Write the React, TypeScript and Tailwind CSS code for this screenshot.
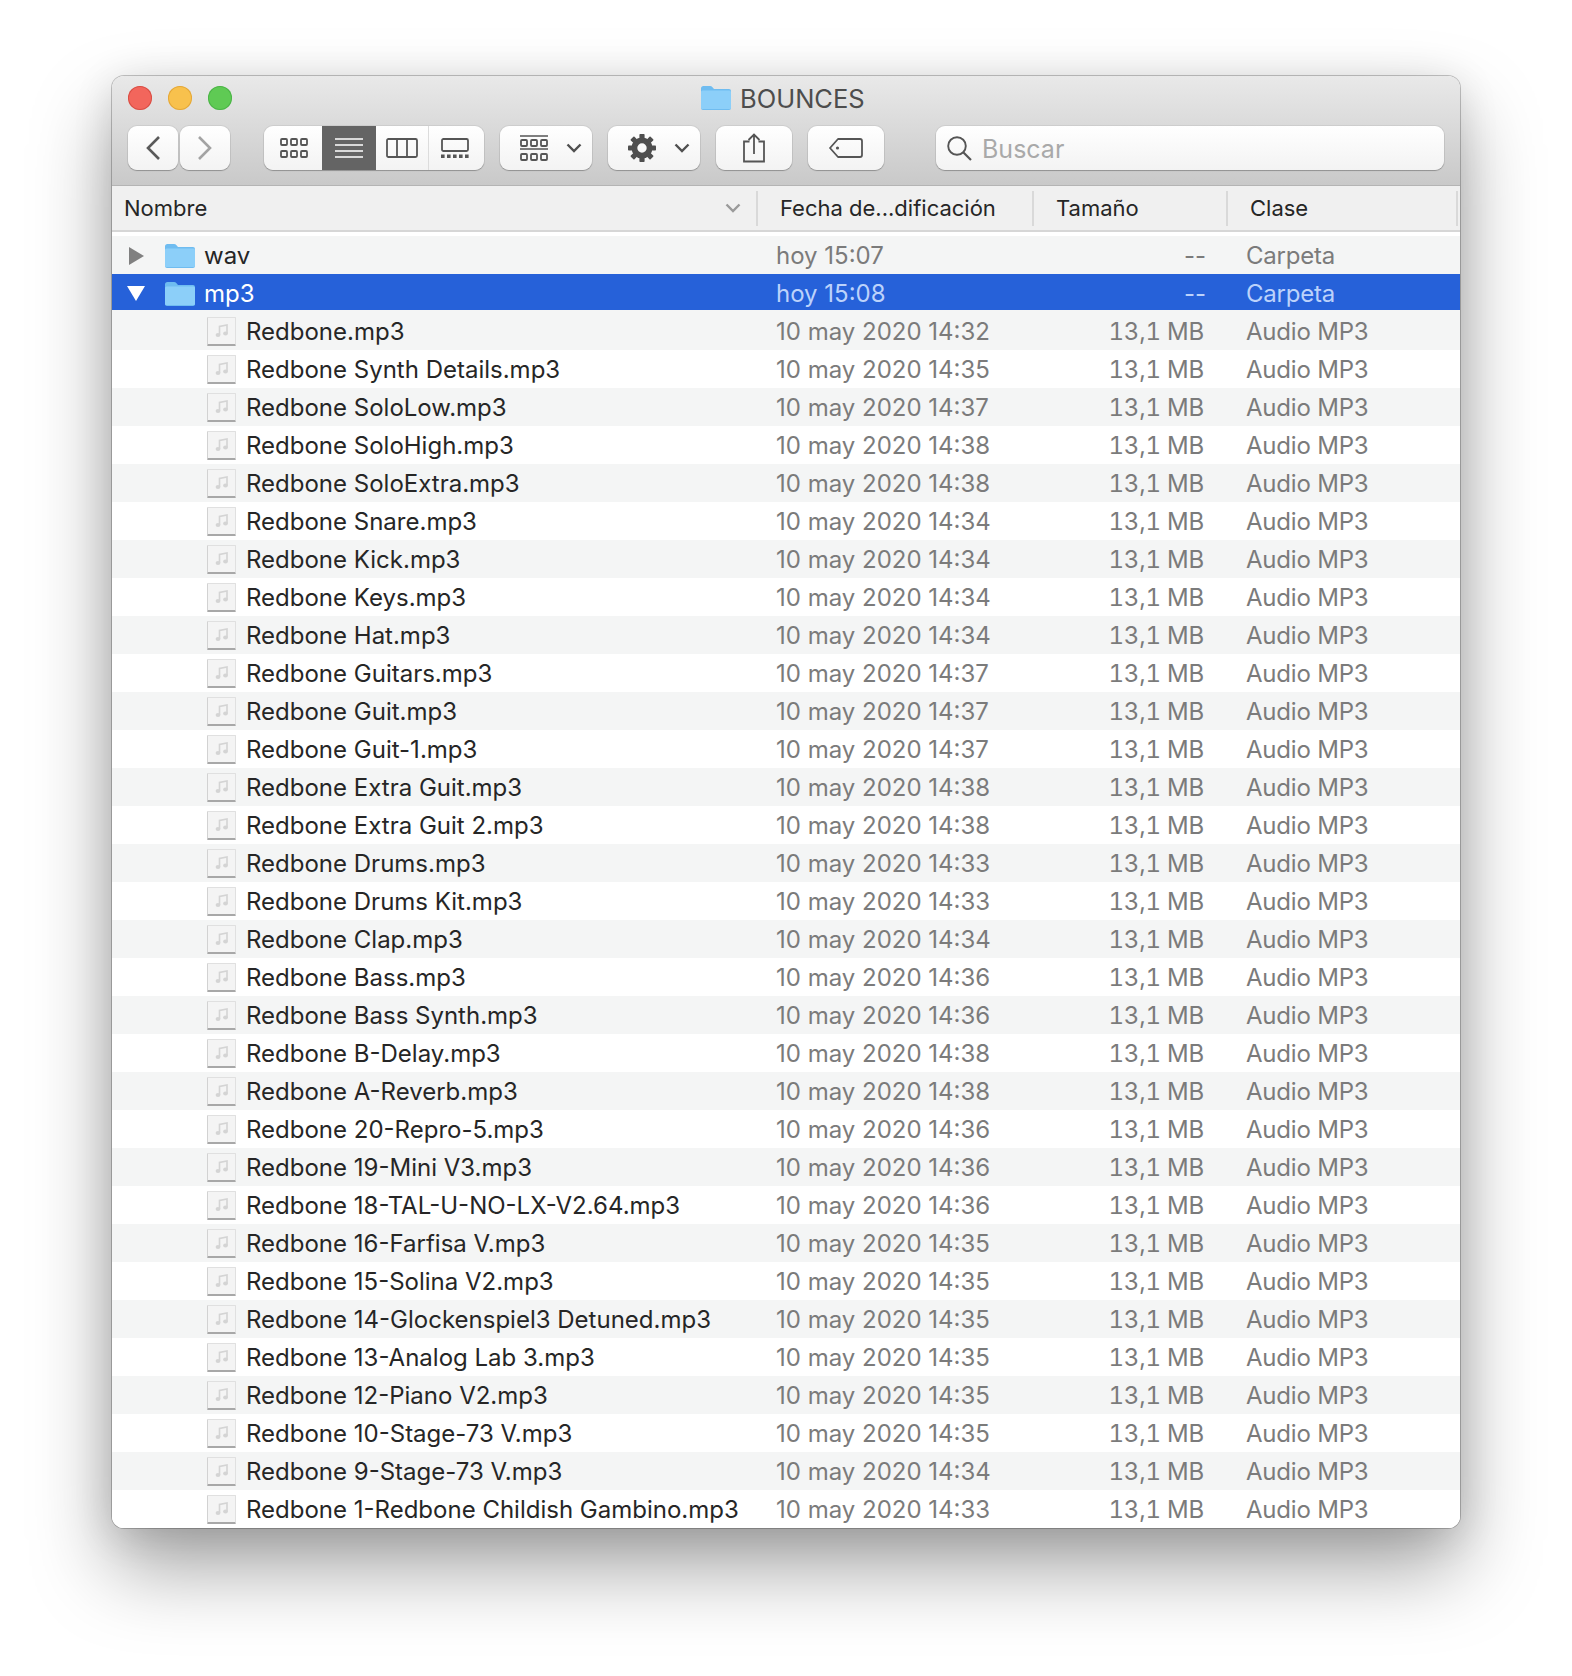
const FONT = "font-['Inter','Liberation_Sans',sans-serif]";

type FileRow = { name: string; date: string };

const files: FileRow[] = [
  { name: 'Redbone.mp3', date: '10 may 2020 14:32' },
  { name: 'Redbone Synth Details.mp3', date: '10 may 2020 14:35' },
  { name: 'Redbone SoloLow.mp3', date: '10 may 2020 14:37' },
  { name: 'Redbone SoloHigh.mp3', date: '10 may 2020 14:38' },
  { name: 'Redbone SoloExtra.mp3', date: '10 may 2020 14:38' },
  { name: 'Redbone Snare.mp3', date: '10 may 2020 14:34' },
  { name: 'Redbone Kick.mp3', date: '10 may 2020 14:34' },
  { name: 'Redbone Keys.mp3', date: '10 may 2020 14:34' },
  { name: 'Redbone Hat.mp3', date: '10 may 2020 14:34' },
  { name: 'Redbone Guitars.mp3', date: '10 may 2020 14:37' },
  { name: 'Redbone Guit.mp3', date: '10 may 2020 14:37' },
  { name: 'Redbone Guit-1.mp3', date: '10 may 2020 14:37' },
  { name: 'Redbone Extra Guit.mp3', date: '10 may 2020 14:38' },
  { name: 'Redbone Extra Guit 2.mp3', date: '10 may 2020 14:38' },
  { name: 'Redbone Drums.mp3', date: '10 may 2020 14:33' },
  { name: 'Redbone Drums Kit.mp3', date: '10 may 2020 14:33' },
  { name: 'Redbone Clap.mp3', date: '10 may 2020 14:34' },
  { name: 'Redbone Bass.mp3', date: '10 may 2020 14:36' },
  { name: 'Redbone Bass Synth.mp3', date: '10 may 2020 14:36' },
  { name: 'Redbone B-Delay.mp3', date: '10 may 2020 14:38' },
  { name: 'Redbone A-Reverb.mp3', date: '10 may 2020 14:38' },
  { name: 'Redbone 20-Repro-5.mp3', date: '10 may 2020 14:36' },
  { name: 'Redbone 19-Mini V3.mp3', date: '10 may 2020 14:36' },
  { name: 'Redbone 18-TAL-U-NO-LX-V2.64.mp3', date: '10 may 2020 14:36' },
  { name: 'Redbone 16-Farfisa V.mp3', date: '10 may 2020 14:35' },
  { name: 'Redbone 15-Solina V2.mp3', date: '10 may 2020 14:35' },
  { name: 'Redbone 14-Glockenspiel3 Detuned.mp3', date: '10 may 2020 14:35' },
  { name: 'Redbone 13-Analog Lab 3.mp3', date: '10 may 2020 14:35' },
  { name: 'Redbone 12-Piano V2.mp3', date: '10 may 2020 14:35' },
  { name: 'Redbone 10-Stage-73 V.mp3', date: '10 may 2020 14:35' },
  { name: 'Redbone 9-Stage-73 V.mp3', date: '10 may 2020 14:34' },
  { name: 'Redbone 1-Redbone Childish Gambino.mp3', date: '10 may 2020 14:33' },
];

function Folder() {
  return (
    <svg width="30" height="24" viewBox="0 0 30 24" className="shrink-0">
      <path d="M0 2.5Q0 0 2.5 0H9Q10.5 0 11.5 1.2L13 3H28Q30 3 30 5V22Q30 24 28 24H2Q0 24 0 22Z" fill="#6fbcf0" />
      <path d="M0 6Q0 4.5 1.5 4.5H28.5Q30 4.5 30 6V22Q30 23 29 23H1Q0 23 0 22Z" fill="#8ccff9" />
    </svg>
  );
}

function FileIcon() {
  return (
    <div className="flex h-[29px] w-[29px] shrink-0 items-center justify-center rounded-[1px] border border-[#e0e0e0] border-b-2 border-b-[#a8a8a8] border-l-[#d2d2d2] bg-[#f4f4f4]">
      <svg width="14" height="14" viewBox="0 0 14 14">
        <path d="M4.5 11V2.5L12 1V9.5" fill="none" stroke="#d4d4d4" strokeWidth="1.6" />
        <ellipse cx="3" cy="11" rx="2.4" ry="1.9" fill="#d4d4d4" />
        <ellipse cx="10.5" cy="9.5" rx="2.4" ry="1.9" fill="#d4d4d4" />
      </svg>
    </div>
  );
}

function Chevron({ dir, color }: { dir: 'left' | 'right'; color: string }) {
  return (
    <svg width="14" height="24" viewBox="0 0 14 24" fill="none" stroke={color} strokeWidth="2.6">
      <path d={dir === 'left' ? 'M13 1L2 12L13 23' : 'M1 1L12 12L1 23'} />
    </svg>
  );
}

function SmallChevron({ color = '#505050' }: { color?: string }) {
  return (
    <svg width="16" height="10" viewBox="0 0 16 10" fill="none" stroke={color} strokeWidth="2.4">
      <path d="M1.5 1.5L8 8L14.5 1.5" />
    </svg>
  );
}

function IconGrid() {
  const cells = [0, 10, 20];
  return (
    <svg width="28" height="20" viewBox="0 0 28 20" fill="none" stroke="#555" strokeWidth="1.8">
      {cells.map((x) => (
        <rect key={`a${x}`} x={x + 1} y="1" width="6" height="6" rx="1" />
      ))}
      {cells.map((x) => (
        <rect key={`b${x}`} x={x + 1} y="13" width="6" height="6" rx="1" />
      ))}
    </svg>
  );
}

function IconList() {
  return (
    <svg width="28" height="20" viewBox="0 0 28 20" stroke="#fff" strokeWidth="1.6">
      <path d="M0 1H28M0 7H28M0 13H28M0 19H28" />
    </svg>
  );
}

function IconColumns() {
  return (
    <svg width="32" height="20" viewBox="0 0 32 20" fill="none" stroke="#555" strokeWidth="1.8">
      <rect x="1" y="1" width="30" height="18" rx="1.5" />
      <path d="M11 1V19M21 1V19" />
    </svg>
  );
}

function IconGallery() {
  return (
    <svg width="28" height="20" viewBox="0 0 28 20" fill="none">
      <rect x="1" y="1" width="26" height="12" rx="1.5" stroke="#555" strokeWidth="1.8" />
      {[0, 6, 12, 18, 24].map((x) => (
        <rect key={x} x={x} y="16.5" width="3.6" height="3.5" fill="#555" />
      ))}
    </svg>
  );
}

function IconGroup() {
  const cells = [1, 11, 21];
  return (
    <svg width="28" height="26" viewBox="0 0 28 26" fill="none" stroke="#555" strokeWidth="1.8">
      <path d="M0 1H28M0 14H28" strokeWidth="1.4" />
      {cells.map((x) => (
        <rect key={`a${x}`} x={x} y="5" width="6" height="6" rx="1" />
      ))}
      {cells.map((x) => (
        <rect key={`b${x}`} x={x} y="19" width="6" height="6" rx="1" />
      ))}
    </svg>
  );
}

function IconGear() {
  return (
    <svg width="28" height="28" viewBox="0 0 28 28" fill="none">
      <circle cx="14" cy="14" r="7.6" stroke="#4f4f4f" strokeWidth="5.8" />
      {[0, 45, 90, 135, 180, 225, 270, 315].map((a) => (
        <rect key={a} x="11.4" y="0" width="5.2" height="6" rx="0.8" fill="#4f4f4f" transform={`rotate(${a} 14 14)`} />
      ))}
    </svg>
  );
}

function IconShare() {
  return (
    <svg width="24" height="30" viewBox="0 0 24 30" fill="none" stroke="#555" strokeWidth="1.8">
      <path d="M7.5 8.5H2V28.5H22V8.5H16.5" />
      <path d="M12 21V1.5M6.5 7L12 1.5L17.5 7" />
    </svg>
  );
}

function IconTag() {
  return (
    <svg width="34" height="20" viewBox="0 0 34 20" fill="none" stroke="#555" strokeWidth="1.8">
      <path d="M9 1H31Q33 1 33 3V17Q33 19 31 19H9L1 10Z" strokeLinejoin="round" />
      <circle cx="8.5" cy="10" r="1.6" fill="#555" stroke="none" />
    </svg>
  );
}

function IconSearch() {
  return (
    <svg width="25" height="25" viewBox="0 0 25 25" fill="none" stroke="#555" strokeWidth="1.9">
      <circle cx="10" cy="10" r="8.8" />
      <path d="M16.5 16.5L24 24" strokeWidth="2.2" />
    </svg>
  );
}

const BTN =
  'flex h-[44px] items-center justify-center rounded-[9px] bg-[linear-gradient(#ffffff,#f3f3f3)] shadow-[0_0_0_1px_rgba(0,0,0,0.06),0_1px_1px_rgba(0,0,0,0.25)]';

function Header() {
  return (
    <div className="flex h-[46px] items-center border-b-2 border-[#d6d6d6] bg-[#f0f0f0] text-[22px] text-[#262626]">
      <div className="flex w-[644px] items-center justify-between pl-[12px] pr-[15px]">
        <span>Nombre</span>
        <SmallChevron color="#9a9a9a" />
      </div>
      <div className="h-[35px] w-[2px] bg-[#d9d9d9]" />
      <div className="w-[274px] pl-[22px]">Fecha de...dificación</div>
      <div className="h-[35px] w-[2px] bg-[#d9d9d9]" />
      <div className="w-[192px] pl-[22px]">Tamaño</div>
      <div className="h-[35px] w-[2px] bg-[#d9d9d9]" />
      <div className="w-[228px] pl-[22px]">Clase</div>
      <div className="h-[35px] w-[2px] bg-[#d9d9d9]" />
    </div>
  );
}

function Cells({ date, size, kind, selected }: { date: string; size: string; kind: string; selected?: boolean }) {
  const tone = selected ? 'text-[#bcd2fb]' : 'text-[#7b7b7b]';
  return (
    <>
      <div className={`w-[281px] shrink-0 ${tone}`}>{date}</div>
      <div className={`w-[147px] shrink-0 text-right ${size === '--' ? 'translate-x-[2px]' : 'tabular-nums tracking-[-0.2px]'} ${tone}`}>
        {size}
      </div>
      <div className={`pl-[42px] tracking-[-0.2px] ${tone}`}>{kind}</div>
    </>
  );
}

export default function App() {
  return (
    <div className={`h-[1676px] w-[1572px] overflow-hidden bg-white pl-[112px] pt-[76px] ${FONT} text-[24px]`}>
      <div className="h-[1452px] w-[1348px] overflow-hidden rounded-[12px] bg-white shadow-[0_0_0_1px_rgba(0,0,0,0.22),0_40px_80px_rgba(0,0,0,0.36),0_6px_40px_rgba(0,0,0,0.12)]">
        {/* Title bar and toolbar */}
        <div className="h-[110px] border-b border-[#b4b4b4] bg-[linear-gradient(#e9e9e9,#c9c9c9)] px-[16px] pt-[10px]">
          <div className="flex h-[24px] items-center">
            <div className="flex w-[104px] justify-between">
              <div className="h-[24px] w-[24px] rounded-full bg-[#f2665c] shadow-[inset_0_0_0_1px_rgba(200,60,50,0.6)]" />
              <div className="h-[24px] w-[24px] rounded-full bg-[#f8c14d] shadow-[inset_0_0_0_1px_rgba(215,150,40,0.6)]" />
              <div className="h-[24px] w-[24px] rounded-full bg-[#5fca54] shadow-[inset_0_0_0_1px_rgba(60,165,60,0.6)]" />
            </div>
            <div className="ml-[469px] flex items-center gap-[9px] text-[25.5px] text-[#4d4d4d]">
              <Folder />
              <span className="pt-[2px]">BOUNCES</span>
            </div>
          </div>
          <div className="mt-[16px] flex items-center">
            <div className={`${BTN} w-[50px]`}>
              <Chevron dir="left" color="#5a5a5a" />
            </div>
            <div className={`${BTN} ml-[2px] w-[50px]`}>
              <Chevron dir="right" color="#a3a3a3" />
            </div>
            <div className={`${BTN} ml-[34px] w-[220px] overflow-hidden`}>
              <div className="flex h-full w-[58px] items-center justify-center pl-[2px]">
                <IconGrid />
              </div>
              <div className="flex h-full w-[54px] items-center justify-center bg-[#646464] pr-[1px]">
                <IconList />
              </div>
              <div className="flex h-full w-[53px] items-center justify-center border-r border-[#dcdcdc]">
                <IconColumns />
              </div>
              <div className="flex h-full w-[55px] items-center justify-center pr-[3px]">
                <IconGallery />
              </div>
            </div>
            <div className={`${BTN} ml-[16px] w-[92px] !justify-start gap-[18px] pl-[20px]`}>
              <IconGroup />
              <SmallChevron />
            </div>
            <div className={`${BTN} ml-[16px] w-[92px] !justify-start gap-[18px] pl-[20px]`}>
              <IconGear />
              <SmallChevron />
            </div>
            <div className={`${BTN} ml-[16px] w-[76px]`}>
              <IconShare />
            </div>
            <div className={`${BTN} ml-[16px] w-[76px]`}>
              <IconTag />
            </div>
            <div className={`${BTN} ml-[52px] w-[508px] !justify-start gap-[10px] pl-[11px] text-[25px] text-[#a9a9a9]`}>
              <IconSearch />
              <span className="pt-[3px]">Buscar</span>
            </div>
          </div>
        </div>

        <Header />

        {/* File list */}
        <div className="bg-white pt-[4px] text-[#262626]">
          <div className="flex h-[38px] items-center bg-[#f4f5f5] pt-[1px]">
            <div className="flex w-[664px] shrink-0 items-center">
              <svg width="15" height="18" viewBox="0 0 15 18" className="ml-[17px] shrink-0">
                <path d="M0 0L15 9L0 18Z" fill="#808080" />
              </svg>
              <div className="ml-[21px] flex items-center gap-[9px]">
                <Folder />
                <span>wav</span>
              </div>
            </div>
            <Cells date="hoy 15:07" size="--" kind="Carpeta" />
          </div>
          <div className="flex h-[38px] items-center bg-[linear-gradient(#2661d9_36px,#f4f5f5_36px)] pt-[1px] text-white">
            <div className="flex w-[664px] shrink-0 items-center">
              <svg width="18" height="15" viewBox="0 0 18 15" className="ml-[15px] shrink-0">
                <path d="M0 0H18L9 15Z" fill="#fff" />
              </svg>
              <div className="ml-[20px] flex items-center gap-[9px]">
                <Folder />
                <span>mp3</span>
              </div>
            </div>
            <Cells date="hoy 15:08" size="--" kind="Carpeta" selected />
          </div>
          {files.map((file, i) => (
            <div key={file.name} className={`flex h-[38px] items-center pt-[1px] ${i % 2 === 0 ? 'bg-[#f4f5f5]' : 'bg-white'}`}>
              <div className="flex w-[664px] shrink-0 items-center gap-[10px] pl-[95px]">
                <FileIcon />
                <span className="whitespace-nowrap">{file.name}</span>
              </div>
              <Cells date={file.date} size="13,1 MB" kind="Audio MP3" />
            </div>
          ))}
        </div>
      </div>
    </div>
  );
}
